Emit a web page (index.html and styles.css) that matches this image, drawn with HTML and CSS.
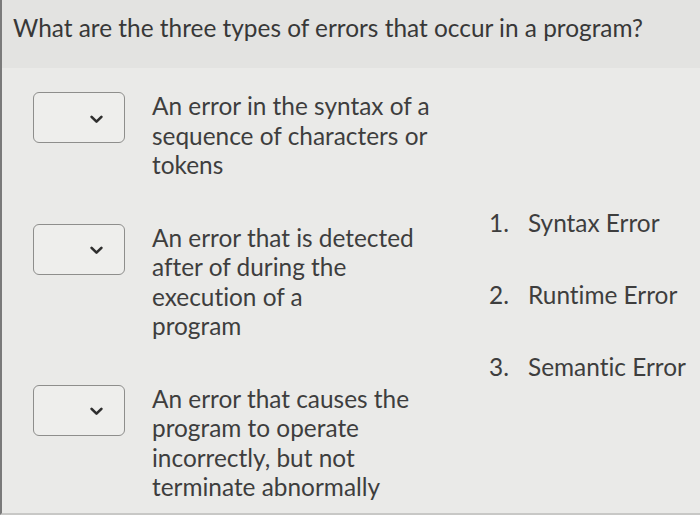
FILE: index.html
```html
<!DOCTYPE html>
<html>
<head>
<meta charset="utf-8">
<link rel="stylesheet" href="styles.css">
</head>
<body>
<div class="frame">
  <header class="question">What are the three types of errors that occur in a program?</header>
  <main class="body">
    <div class="matches">
      <div class="row">
        <div class="select"><svg class="chev" width="13" height="9" viewBox="0 0 13 9"><path d="M1.6 1.8 L6.5 6.7 L11.4 1.8" fill="none" stroke="#2e2e2e" stroke-width="2.6" stroke-linecap="round" stroke-linejoin="round"/></svg></div>
        <p class="desc">An error in the syntax of a<br>sequence of characters or<br>tokens</p>
      </div>
      <div class="row">
        <div class="select"><svg class="chev" width="13" height="9" viewBox="0 0 13 9"><path d="M1.6 1.8 L6.5 6.7 L11.4 1.8" fill="none" stroke="#2e2e2e" stroke-width="2.6" stroke-linecap="round" stroke-linejoin="round"/></svg></div>
        <p class="desc">An error that is detected<br>after of during the<br>execution of a<br>program</p>
      </div>
      <div class="row">
        <div class="select"><svg class="chev" width="13" height="9" viewBox="0 0 13 9"><path d="M1.6 1.8 L6.5 6.7 L11.4 1.8" fill="none" stroke="#2e2e2e" stroke-width="2.6" stroke-linecap="round" stroke-linejoin="round"/></svg></div>
        <p class="desc">An error that causes the<br>program to operate<br>incorrectly, but not<br>terminate abnormally</p>
      </div>
    </div>
    <ol class="answers">
      <li><span class="num">1.</span><span>Syntax Error</span></li>
      <li><span class="num">2.</span><span>Runtime Error</span></li>
      <li><span class="num">3.</span><span>Semantic Error</span></li>
    </ol>
  </main>
</div>
</body>
</html>
```
FILE: styles.css
```css
html, body {
  margin: 0;
  padding: 0;
}
body {
  width: 700px;
  height: 515px;
  overflow: hidden;
  background: #eaeae8;
  font-family: Lato, "Open Sans", sans-serif;
  font-variant-ligatures: none;
  color: #3e3e3e;
}
.frame {
  width: 698px;
  height: 513px;
  border-left: 2px solid #7a7a7a;
  border-bottom: 2px solid #c8c8c6;
  display: flex;
  flex-direction: column;
}
.question {
  height: 68px;
  box-sizing: border-box;
  padding: 13px 0 0 11px;
  font-size: 24.4px;
  line-height: 30px;
  color: #383838;
  background: #e3e3e1;
}
.body {
  flex: 1;
  display: flex;
}
.matches {
  display: flex;
  flex-direction: column;
  gap: 44px;
  padding: 24px 0 0 31px;
  width: 420px;
}
.row {
  display: flex;
  gap: 27px;
  align-items: flex-start;
}
.select {
  width: 92px;
  height: 51px;
  box-sizing: border-box;
  border: 1.5px solid #8e8e8c;
  border-radius: 6px;
  background: #eeeeec;
  display: flex;
  align-items: center;
  justify-content: flex-end;
  padding: 3px 21px 0 0;
  flex: none;
}
.chev {
  display: block;
}
.desc {
  margin: 0;
  font-size: 24.4px;
  line-height: 29.5px;
  margin-top: -1px;
}
.answers {
  list-style: none;
  margin: 0;
  padding: 140px 0 0 36px;
  display: flex;
  flex-direction: column;
  gap: 43px;
}
.answers li {
  display: flex;
  font-size: 24.4px;
  line-height: 29px;
  white-space: nowrap;
}
.answers .num {
  width: 39px;
}
```
